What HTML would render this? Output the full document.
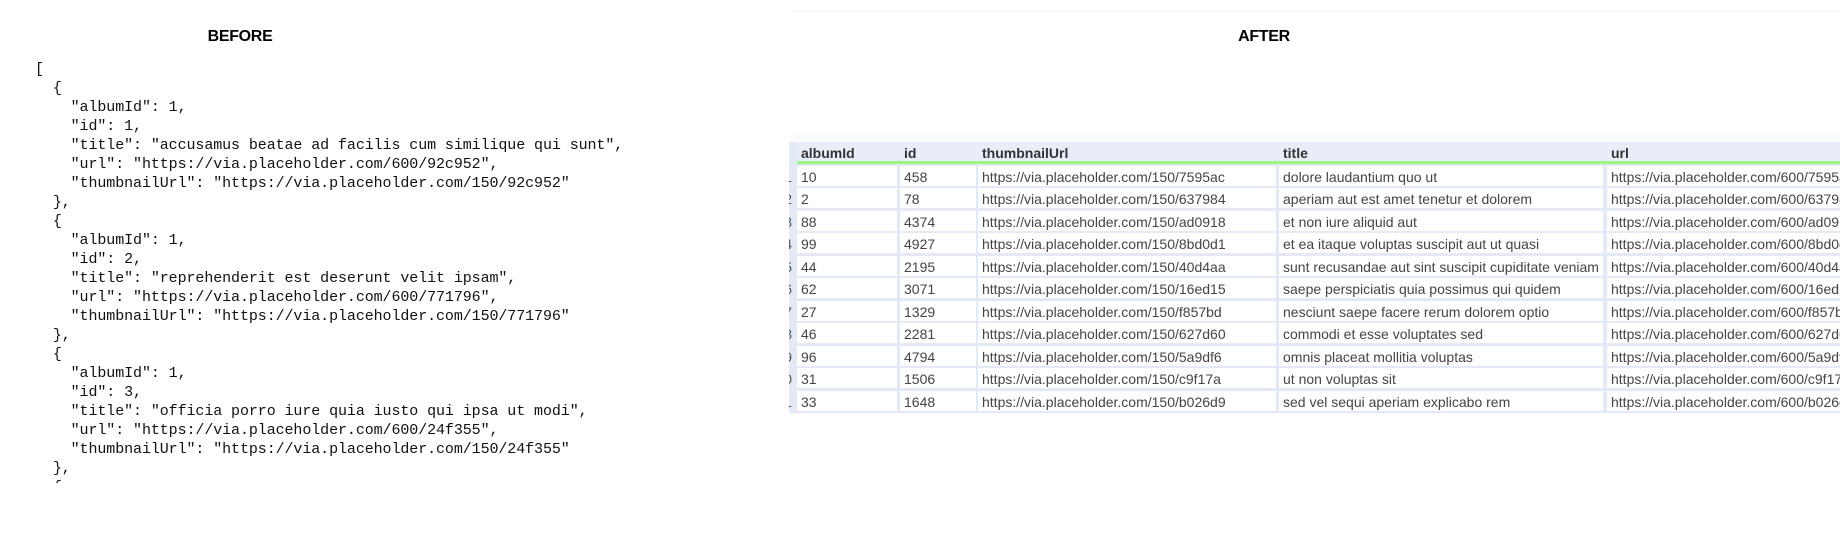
<!DOCTYPE html>
<html><head><meta charset="utf-8"><style>
html,body{margin:0;padding:0;background:#fff;width:1840px;height:538px;overflow:hidden}
.h{position:absolute;font:bold 16px/20px "Liberation Sans",sans-serif;letter-spacing:-.3px;color:#000;top:27px;transform:translateX(-50%)}
pre{position:absolute;left:35px;top:59.6px;margin:0;height:423px;overflow:hidden;font:15px/19px "Liberation Mono",monospace;letter-spacing:-.09px;color:#111}
#t{position:absolute;left:789px;top:135px;width:1051px;height:278px;overflow:hidden;background:#e4eaf5;font:14px/22px "Liberation Sans",sans-serif;color:#444;filter:blur(.3px)}
#t .top{position:absolute;left:0;top:0;width:100%;height:7px;background:#f8fafc}
.r{position:absolute;left:0;height:20px;width:1051px}
.r div{position:absolute;top:0;height:20px;background:#fff;white-space:nowrap;overflow:hidden;padding-left:4px;box-sizing:border-box}
.r .n{left:-6px;width:9px;padding:0;background:none;text-align:right;color:#555}
.a{left:8px;width:100px}.b{left:111px;width:76px}.c{left:189px;width:298px}.d{left:490px;width:324px}.e{left:818px;width:233px}
.hd div{background:#e8edf7;height:19px;line-height:22px;font-weight:bold;color:#333;border-bottom:3px solid #9cf57e;box-sizing:content-box;padding-left:4px}
</style></head><body>
<div class="h" style="left:240px">BEFORE</div>
<div class="h" style="left:1264px">AFTER</div>
<div style="position:absolute;left:792px;top:11px;width:1048px;height:1px;background:#f4f4f6"></div>
<pre>[
  {
    "albumId": 1,
    "id": 1,
    "title": "accusamus beatae ad facilis cum similique qui sunt",
    "url": "https://via.placeholder.com/600/92c952",
    "thumbnailUrl": "https://via.placeholder.com/150/92c952"
  },
  {
    "albumId": 1,
    "id": 2,
    "title": "reprehenderit est deserunt velit ipsam",
    "url": "https://via.placeholder.com/600/771796",
    "thumbnailUrl": "https://via.placeholder.com/150/771796"
  },
  {
    "albumId": 1,
    "id": 3,
    "title": "officia porro iure quia iusto qui ipsa ut modi",
    "url": "https://via.placeholder.com/600/24f355",
    "thumbnailUrl": "https://via.placeholder.com/150/24f355"
  },
  {
</pre>
<div id="t"><div class="top"></div>
<div class="r hd" style="top:7px"><div class="a">albumId</div><div class="b">id</div><div class="c">thumbnailUrl</div><div class="d">title</div><div class="e">url</div></div>
<div class="r" style="top:31px"><div class="n">1</div><div class="a">10</div><div class="b">458</div><div class="c">https://via.placeholder.com/150/7595ac</div><div class="d">dolore laudantium quo ut</div><div class="e">https://via.placeholder.com/600/7595ac</div></div>
<div class="r" style="top:53px"><div class="n">2</div><div class="a">2</div><div class="b">78</div><div class="c">https://via.placeholder.com/150/637984</div><div class="d">aperiam aut est amet tenetur et dolorem</div><div class="e">https://via.placeholder.com/600/637984</div></div>
<div class="r" style="top:76px"><div class="n">3</div><div class="a">88</div><div class="b">4374</div><div class="c">https://via.placeholder.com/150/ad0918</div><div class="d">et non iure aliquid aut</div><div class="e">https://via.placeholder.com/600/ad0918</div></div>
<div class="r" style="top:98px"><div class="n">4</div><div class="a">99</div><div class="b">4927</div><div class="c">https://via.placeholder.com/150/8bd0d1</div><div class="d">et ea itaque voluptas suscipit aut ut quasi</div><div class="e">https://via.placeholder.com/600/8bd0d1</div></div>
<div class="r" style="top:121px"><div class="n">5</div><div class="a">44</div><div class="b">2195</div><div class="c">https://via.placeholder.com/150/40d4aa</div><div class="d">sunt recusandae aut sint suscipit cupiditate veniam</div><div class="e">https://via.placeholder.com/600/40d4aa</div></div>
<div class="r" style="top:143px"><div class="n">6</div><div class="a">62</div><div class="b">3071</div><div class="c">https://via.placeholder.com/150/16ed15</div><div class="d">saepe perspiciatis quia possimus qui quidem</div><div class="e">https://via.placeholder.com/600/16ed15</div></div>
<div class="r" style="top:166px"><div class="n">7</div><div class="a">27</div><div class="b">1329</div><div class="c">https://via.placeholder.com/150/f857bd</div><div class="d">nesciunt saepe facere rerum dolorem optio</div><div class="e">https://via.placeholder.com/600/f857bd</div></div>
<div class="r" style="top:188px"><div class="n">8</div><div class="a">46</div><div class="b">2281</div><div class="c">https://via.placeholder.com/150/627d60</div><div class="d">commodi et esse voluptates sed</div><div class="e">https://via.placeholder.com/600/627d60</div></div>
<div class="r" style="top:211px"><div class="n">9</div><div class="a">96</div><div class="b">4794</div><div class="c">https://via.placeholder.com/150/5a9df6</div><div class="d">omnis placeat mollitia voluptas</div><div class="e">https://via.placeholder.com/600/5a9df6</div></div>
<div class="r" style="top:233px"><div class="n">0</div><div class="a">31</div><div class="b">1506</div><div class="c">https://via.placeholder.com/150/c9f17a</div><div class="d">ut non voluptas sit</div><div class="e">https://via.placeholder.com/600/c9f17a</div></div>
<div class="r" style="top:256px"><div class="n">1</div><div class="a">33</div><div class="b">1648</div><div class="c">https://via.placeholder.com/150/b026d9</div><div class="d">sed vel sequi aperiam explicabo rem</div><div class="e">https://via.placeholder.com/600/b026d9</div></div>
</div>
</body></html>
